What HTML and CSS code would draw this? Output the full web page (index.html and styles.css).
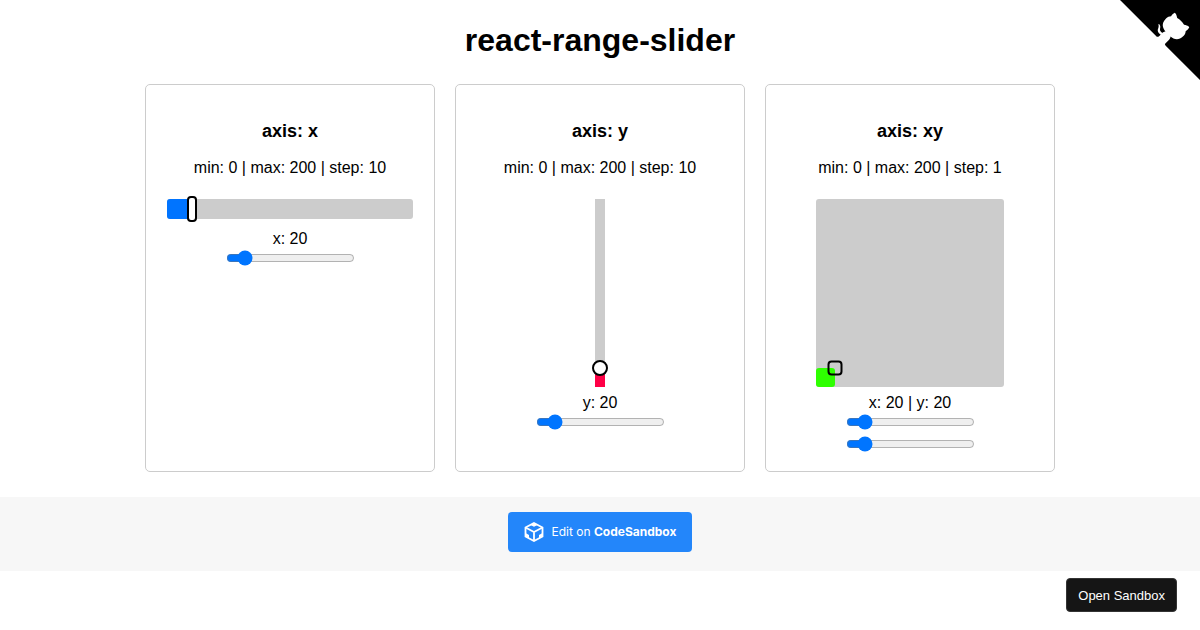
FILE: index.html
```html
<!DOCTYPE html>
<html lang="en">
<head>
    <meta charset="UTF-8">
    <meta name="viewport" content="width=device-width, initial-scale=1.0">
    <title>react-range-slider</title>
    <link rel="stylesheet" href="styles.css">
</head>
<body>
    <a class="github-corner" href="#" aria-label="View source on GitHub">
        <svg width="80" height="80" viewBox="0 0 250 250" aria-hidden="true">
            <path d="M0,0 L115,115 L130,115 L142,142 L250,250 L250,0 Z"></path>
            <path fill="#fff" d="M128.3,109.0 C113.8,99.7 119.0,89.6 119.0,89.6 C122.0,82.7 120.5,78.6 120.5,78.6 C119.2,72.0 123.4,76.3 123.4,76.3 C127.3,80.9 125.5,87.3 125.5,87.3 C122.9,97.6 130.6,101.9 134.4,103.2"></path>
            <path fill="#fff" d="M115.0,115.0 C114.9,115.1 118.7,116.5 119.8,115.4 L133.7,101.6 C136.9,99.2 139.9,98.4 142.2,98.6 C133.8,88.0 127.5,74.4 143.8,58.0 C148.5,53.4 154.0,51.2 159.7,51.0 C160.3,49.4 163.2,43.6 171.4,40.1 C171.4,40.1 176.1,42.5 178.8,56.2 C183.1,58.6 187.2,61.8 190.9,65.4 C194.5,69.0 197.7,73.2 200.1,77.6 C213.8,80.2 216.3,84.9 216.3,84.9 C212.7,93.1 206.9,96.0 205.4,96.6 C205.1,102.4 203.0,107.8 198.3,112.5 C181.9,128.9 168.3,122.5 157.7,114.1 C157.9,116.9 156.7,120.9 152.7,124.9 L141.0,136.5 C139.8,137.7 141.6,141.9 141.8,141.8 Z"></path>
        </svg>
    </a>

    <h1>react-range-slider</h1>

    <main class="cards">
        <section class="card">
            <h2>axis: x</h2>
            <p class="info">min: 0 | max: 200 | step: 10</p>
            <div class="slider slider-x">
                <div class="active" style="width: 10%"></div>
                <div class="handle" style="left: 10%"></div>
            </div>
            <label for="x">x: 20</label>
            <input id="x" type="range" min="0" max="200" step="10" value="20">
        </section>

        <section class="card">
            <h2>axis: y</h2>
            <p class="info">min: 0 | max: 200 | step: 10</p>
            <div class="slider slider-y">
                <div class="active" style="height: 10%"></div>
                <div class="handle" style="top: 90%"></div>
            </div>
            <label for="y">y: 20</label>
            <input id="y" type="range" min="0" max="200" step="10" value="20">
        </section>

        <section class="card">
            <h2>axis: xy</h2>
            <p class="info">min: 0 | max: 200 | step: 1</p>
            <div class="slider slider-xy">
                <div class="active" style="width: 10%; height: 10%"></div>
                <div class="handle" style="left: 10%; top: 90%"></div>
            </div>
            <label for="xy-x">x: 20 | y: 20</label>
            <input id="xy-x" type="range" min="0" max="200" step="1" value="20">
            <input id="xy-y" type="range" min="0" max="200" step="1" value="20" aria-label="y">
        </section>
    </main>

    <footer>
        <a class="edit-link" href="#">
            <svg width="20" height="20" viewBox="0 0 20 20" fill="none" stroke="#fff" stroke-width="1.8" aria-hidden="true">
                <path d="M10 1 L18.500 5.500 V14.500 L10 19 L1.500 14.500 V5.500 Z"></path>
                <path d="M1.500 5.500 L10 10 L18.500 5.500 M10 10 V19"></path>
                <path fill="#fff" stroke="none" d="M6.500 3 L10 4.800 L13.500 3 L10 1 Z M1.500 11 L5 13 V16.500 L1.500 14.500 Z M18.500 11 L15 13 V16.500 L18.500 14.500 Z"></path>
            </svg>
            <span>Edit on <strong>CodeSandbox</strong></span>
        </a>
    </footer>

    <button class="open-sandbox" type="button">Open Sandbox</button>
</body>
</html>
```

FILE: styles.css
```css
* {
    box-sizing: border-box;
}
body {
    margin: 0;
    font-family: Helvetica, "Liberation Sans", Arial, sans-serif;
    font-size: 16px;
    line-height: 18px;
    color: #000;
    text-align: center;
}
h1 {
    margin: 22px 0 26px;
    font-size: 32px;
    line-height: 36px;
}
.github-corner {
    position: absolute;
    top: 0;
    right: 0;
}
.github-corner svg {
    display: block;
}
.cards {
    display: flex;
    flex-wrap: wrap;
    justify-content: center;
    gap: 20px;
    margin-bottom: 25px;
}
.card {
    display: flex;
    flex-direction: column;
    align-items: center;
    width: 290px;
    padding: 35px 21px 16px;
    border: 1px solid #ccc;
    border-radius: 5px;
}
.card h2 {
    margin: 0 0 17px;
    font-size: 18px;
    line-height: 22px;
}
.info {
    margin: 0 0 22px;
}
.slider {
    position: relative;
    margin-bottom: 8px;
    background-color: #ccc;
}
.slider-x {
    width: 100%;
    height: 20px;
    margin-bottom: 12px;
    border-radius: 3px;
}
.slider-y {
    width: 10px;
    height: 188px;
}
.slider-xy {
    width: 188px;
    height: 188px;
    border-radius: 3px;
}
.active {
    position: absolute;
    left: 0;
    bottom: 0;
    width: 100%;
    height: 100%;
}
.slider-x .active {
    background-color: #0074ff;
    border-radius: 3px;
}
.slider-y .active {
    background-color: #ff0046;
}
.slider-xy .active {
    background-color: #2eff00;
    border-radius: 3px;
}
.handle {
    position: absolute;
    top: 50%;
    left: 50%;
    border: 2px solid #000;
    transform: translate(-50%, -50%);
}
.slider-x .handle {
    width: 10px;
    height: 26px;
    background-color: #fff;
    border-radius: 4px;
}
.slider-y .handle {
    width: 16px;
    height: 16px;
    background-color: #fff;
    border-radius: 50%;
}
.slider-xy .handle {
    width: 15px;
    height: 15px;
    border-radius: 4px;
}
.card label {
    line-height: 16px;
}
.card input {
    width: 129px;
    height: 16px;
    margin: 3px 2px;
}
footer {
    display: flex;
    justify-content: center;
    padding: 15px 15px 19px;
    background-color: #f7f7f7;
}
.edit-link {
    display: flex;
    align-items: center;
    gap: 8px;
    height: 40px;
    padding: 0 16px;
    font-family: Inter, "Liberation Sans", sans-serif;
    font-size: 12px;
    color: #fff;
    text-decoration: none;
    background-color: #2386fa;
    border-radius: 4px;
}
.open-sandbox {
    position: fixed;
    right: 23px;
    bottom: 18px;
    height: 34px;
    padding: 0 11px;
    font-family: inherit;
    font-size: 13px;
    color: #fff;
    background-color: #151515;
    border: 1px solid #343434;
    border-radius: 4px;
    cursor: pointer;
}
```
